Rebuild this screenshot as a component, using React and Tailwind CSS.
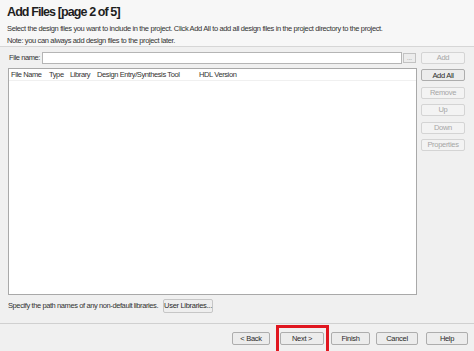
import React from "react";

const Btn = ({ children, disabled, className = "" }) => (
  <div
    className={
      "flex items-center justify-center rounded-[2px] border text-[7.5px] tracking-[-0.3px] leading-none " +
      (disabled
        ? "border-[#d4d4d4] bg-[#f3f3f3] text-[#a6a6a6] "
        : "border-[#adadad] bg-[#ececec] text-[#2a2a2a] ") +
      className
    }
  >
    {children}
  </div>
);

const columns = [
  { label: "File Name", w: "w-[38px]" },
  { label: "Type", w: "w-[21px]" },
  { label: "Library", w: "w-[27px]" },
  { label: "Design Entry/Synthesis Tool", w: "w-[102px]" },
  { label: "HDL Version", w: "w-[40px]" },
];

export default function App() {
  return (
    <div className="w-[474px] h-[351px] overflow-hidden bg-[#f0f0f0] flex flex-col font-['Liberation_Sans',Arial,sans-serif] text-[#333]">
      {/* header */}
      <div className="h-[47px] shrink-0 bg-[#f7f7f7] border-b border-[#d6d6d6] pl-[7px] pt-[5px]">
        <div className="text-[12.5px] font-bold leading-[15px] tracking-[-0.9px] text-[#1e1e1e]">
          Add Files [page 2 of 5]
        </div>
        <div className="mt-[3px] text-[7.5px] leading-[12px] tracking-[-0.36px]">
          Select the design files you want to include in the project. Click Add All to add all design files in the project directory to the project.
        </div>
        <div className="text-[7.5px] leading-[11px] tracking-[-0.36px]">
          Note: you can always add design files to the project later.
        </div>
      </div>

      {/* main */}
      <div className="h-[277px] shrink-0 flex border-b border-[#d0d0d0] pl-[8px] pt-[5px]">
        <div className="w-[409px] flex flex-col">
          <div className="h-[12px] flex items-center">
            <div className="w-[34px] pl-[1px] text-[7.5px] tracking-[-0.4px]">File name:</div>
            <div className="w-[360px] h-[12px] bg-white border border-[#b5b5b5]" />
            <div className="ml-[1px] w-[13px] h-[10px] flex items-end justify-center border border-[#c2c2c2] bg-[#ececec] text-[6px] leading-[7px] text-[#777]">
              ...
            </div>
          </div>
          <div className="mt-[4px] h-[227px] bg-white border border-[#a9a9a9] flex flex-col">
            <div className="h-[12px] flex items-center pl-[2px] border-b border-[#f0f0f0] text-[7.5px] tracking-[-0.4px] text-[#333]">
              {columns.map((c) => (
                <div key={c.label} className={c.w + " shrink-0 whitespace-nowrap"}>
                  {c.label}
                </div>
              ))}
            </div>
          </div>
          <div className="mt-[3px] h-[15px] flex items-center">
            <div className="w-[155px] whitespace-nowrap text-[7.5px] tracking-[-0.4px]">
              Specify the path names of any non-default libraries.
            </div>
            <Btn className="w-[50px] h-[14px] border-[#c6c6c6] bg-[#eeeeee]">User Libraries...</Btn>
          </div>
        </div>
        <div className="ml-[4px] w-[44px] flex flex-col gap-[5.4px]">
          <Btn disabled className="h-[12px]">Add</Btn>
          <Btn className="h-[12px] border-[#9a9a9a]">Add All</Btn>
          <Btn disabled className="h-[12px]">Remove</Btn>
          <Btn disabled className="h-[12px]">Up</Btn>
          <Btn disabled className="h-[12px]">Down</Btn>
          <Btn disabled className="h-[12px]">Properties</Btn>
        </div>
      </div>

      {/* footer */}
      <div className="relative flex-1 flex items-start pt-[8px] pl-[232px]">
        <Btn className="w-[38px] h-[13px]">&lt; Back</Btn>
        <Btn className="ml-[10px] w-[44px] h-[13px] border-[#3d84c4] bg-[#e3eef8]">Next &gt;</Btn>
        <Btn className="ml-[7px] w-[39px] h-[13px]">Finish</Btn>
        <Btn className="ml-[6px] w-[42px] h-[13px]">Cancel</Btn>
        <Btn className="ml-[8px] w-[42px] h-[13px]">Help</Btn>
        <div className="absolute left-[276px] top-[1px] w-[53px] h-[30px] border-[3px] border-[#e0161f]" />
      </div>
    </div>
  );
}
